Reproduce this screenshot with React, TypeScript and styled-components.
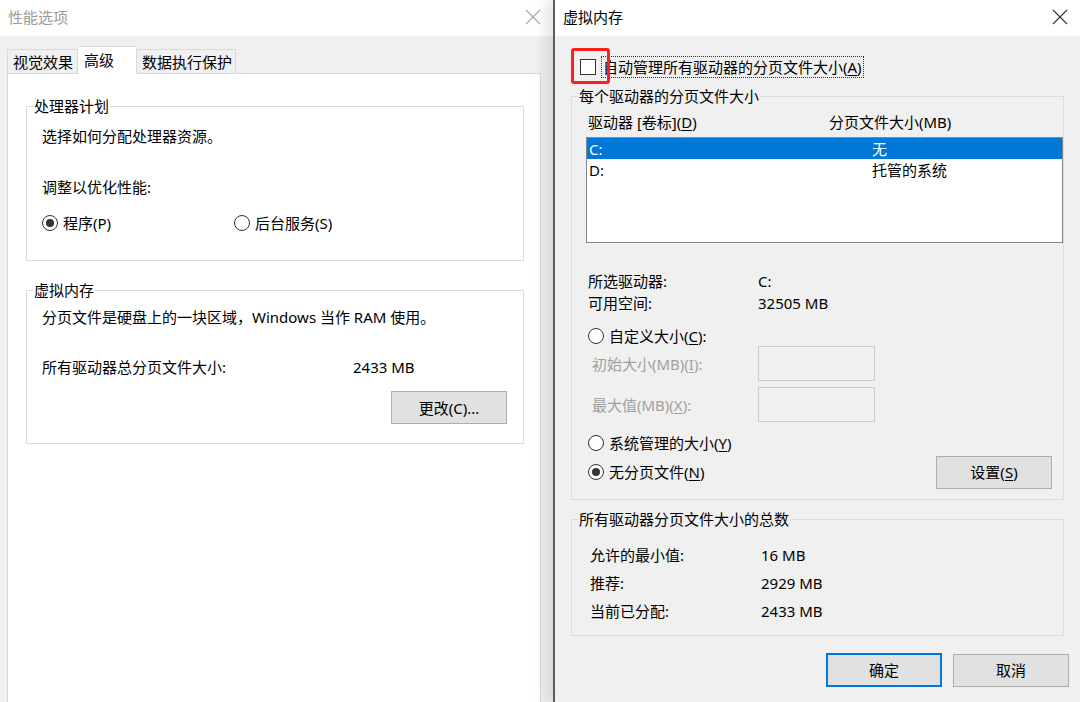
import React from 'react';
import styled, { createGlobalStyle } from 'styled-components';

const GlobalStyle = createGlobalStyle`
    html, body {
        margin: 0;
        padding: 0;
        background: #f0f0f0;
    }
    body {
        font-family: "Noto Sans", "Noto Sans CJK SC", sans-serif;
        font-size: 15px;
        line-height: 20px;
        color: #000;
    }
    * {
        box-sizing: border-box;
    }
`;

const Screen = styled.div`
    display: flex;
    width: 1080px;
    height: 702px;
    overflow: hidden;
`;

const Window = styled.div<{ $width?: number; $front?: boolean }>`
    display: flex;
    flex-direction: column;
    height: 100%;
    ${(p) => (p.$width ? `width: ${p.$width}px; flex: none;` : 'flex: 1;')}
    ${(p) =>
        p.$front &&
        `
        border-left: 2px solid #5c5c5c;
        box-shadow: -8px 0 12px rgba(0, 0, 0, 0.1);
        position: relative;
        z-index: 2;
    `}
`;

const TitleBar = styled.div<{ $inactive?: boolean }>`
    display: flex;
    align-items: center;
    justify-content: space-between;
    height: 36px;
    flex: none;
    background: #fff;
    padding: 0 12px 2px 8px;
    color: ${(p) => (p.$inactive ? '#9a9a9a' : '#000')};
`;

const CloseButton = styled.svg<{ $inactive?: boolean }>`
    width: 16px;
    height: 16px;
    stroke: ${(p) => (p.$inactive ? '#a8a8a8' : '#333')};
    stroke-width: 1.1;
    flex: none;
`;

const Close = ({ inactive }: { inactive?: boolean }) => (
    <CloseButton $inactive={inactive} viewBox="0 0 16 16">
        <line x1="1" y1="1" x2="15" y2="15" />
        <line x1="15" y1="1" x2="1" y2="15" />
    </CloseButton>
);

/* ---------- left dialog ---------- */

const LeftBody = styled.div`
    flex: 1;
    display: flex;
    flex-direction: column;
    background: #f0f0f0;
    padding: 10px 12px 0 7px;
`;

const TabStrip = styled.div`
    display: flex;
    align-items: flex-end;
    height: 27px;
    flex: none;
`;

const Tab = styled.div<{ $active?: boolean; $w: number }>`
    width: ${(p) => p.$w}px;
    height: ${(p) => (p.$active ? 28 : 24)}px;
    margin-bottom: ${(p) => (p.$active ? -1 : 0)}px;
    padding: ${(p) => (p.$active ? '3px 0 0 6px' : '2px 0 0 5px')};
    background: ${(p) => (p.$active ? '#fff' : '#f0f0f0')};
    border: 1px solid #d9d9d9;
    border-bottom: none;
    ${(p) => (p.$active ? 'border-left: none; border-right: none;' : '')}
    position: relative;
    z-index: 1;
    white-space: nowrap;
`;

const TabPanel = styled.div`
    flex: 1;
    background: #fff;
    border: 1px solid #d9d9d9;
    border-bottom: none;
    padding: 22px 16px 0 18px;
`;

const Group = styled.fieldset<{ $mt?: number; $pl?: number; $pr?: number; $pb?: number; $mr?: number }>`
    margin: ${(p) => p.$mt ?? 0}px ${(p) => p.$mr ?? 0}px 0 0;
    padding: 0 ${(p) => p.$pr ?? 16}px ${(p) => p.$pb ?? 10}px ${(p) => p.$pl ?? 15}px;
    border: 1px solid #dcdcdc;
    min-width: 0;
`;

const Legend = styled.legend<{ $ml?: number }>`
    margin-left: ${(p) => p.$ml ?? -9}px;
    padding: 0 1px;
    line-height: 20px;
`;

const TextRow = styled.div<{ $mt?: number }>`
    margin-top: ${(p) => p.$mt ?? 0}px;
    height: 20px;
    white-space: nowrap;
`;

const RadioRow = styled.div<{ $mt?: number; $cols?: string; $pl?: number }>`
    display: grid;
    grid-template-columns: ${(p) => p.$cols ?? 'auto'};
    align-items: center;
    margin-top: ${(p) => p.$mt ?? 0}px;
    padding-left: ${(p) => p.$pl ?? 0}px;
    min-height: 20px;
`;

const RadioLabel = styled.label`
    display: flex;
    align-items: center;
    gap: 5px;
    white-space: nowrap;
`;

const RadioCircle = styled.span<{ $checked?: boolean }>`
    width: 16px;
    height: 16px;
    flex: none;
    border-radius: 50%;
    border: 1px solid #333;
    background: #fff;
    display: flex;
    align-items: center;
    justify-content: center;
    &::after {
        content: '';
        width: 8px;
        height: 8px;
        border-radius: 50%;
        background: ${(p) => (p.$checked ? '#333' : 'transparent')};
    }
`;

const Radio = ({ checked, children }: { checked?: boolean; children: React.ReactNode }) => (
    <RadioLabel>
        <RadioCircle $checked={checked} />
        <span>{children}</span>
    </RadioLabel>
);

const InfoRow = styled.div<{ $cols: number; $h?: number; $mt?: number; $pl?: number }>`
    display: grid;
    grid-template-columns: ${(p) => p.$cols}px auto;
    align-items: center;
    height: ${(p) => p.$h ?? 20}px;
    margin-top: ${(p) => p.$mt ?? 0}px;
    padding-left: ${(p) => p.$pl ?? 0}px;
    white-space: nowrap;
`;

const TotalsList = styled.div`
    margin-top: 12px;
`;

const ButtonRow = styled.div<{ $mt?: number }>`
    display: flex;
    justify-content: flex-end;
    align-items: center;
    gap: 11px;
    margin-top: ${(p) => p.$mt ?? 0}px;
`;

const Button = styled.button<{ $default?: boolean }>`
    width: 116px;
    height: ${(p) => (p.$default ? 34 : 33)}px;
    background: #e1e1e1;
    border: ${(p) => (p.$default ? '2px solid #0078d7' : '1px solid #adadad')};
    font: inherit;
    color: #000;
    padding: 0;
    border-radius: 0;
`;

const U = styled.span`
    text-decoration: underline;
    text-underline-offset: 2px;
`;

/* ---------- right dialog ---------- */

const RightBody = styled.div`
    flex: 1;
    display: flex;
    flex-direction: column;
    background: #f0f0f0;
    padding: 20px 11px 0 16px;
`;

const CheckRow = styled.div`
    display: flex;
    align-items: center;
    height: 22px;
    padding-left: 9px;
`;

const CheckBox = styled.span`
    position: relative;
    width: 16px;
    height: 16px;
    flex: none;
    border: 1px solid #333;
    background: #fff;
`;

const Highlight = styled.span`
    position: absolute;
    left: -10px;
    top: -12px;
    width: 39px;
    height: 36px;
    border: 3px solid #ff1e1e;
    border-radius: 3px;
`;

const FocusLabel = styled.span`
    margin-left: 5px;
    height: 22px;
    padding: 0 1px;
    border: 1px dotted #333;
    display: flex;
    align-items: center;
    white-space: nowrap;
`;

const HeaderRow = styled.div`
    display: grid;
    grid-template-columns: 241px auto;
    margin-top: 6px;
    padding-left: 2px;
    height: 20px;
    white-space: nowrap;
`;

const ListBox = styled.div`
    margin-top: 5px;
    height: 106px;
    background: #fff;
    border: 1px solid #828790;
`;

const ListItem = styled.div<{ $selected?: boolean }>`
    display: grid;
    grid-template-columns: 283px auto;
    height: 21px;
    align-items: center;
    padding-left: 2px;
    background: ${(p) => (p.$selected ? '#0078d7' : 'transparent')};
    color: ${(p) => (p.$selected ? '#fff' : '#000')};
`;

const SizeRow = styled.div<{ $mt?: number }>`
    display: grid;
    grid-template-columns: 166px auto;
    align-items: center;
    height: 35px;
    margin-top: ${(p) => p.$mt ?? 0}px;
    padding-left: 6px;
    color: #a0a0a0;
    white-space: nowrap;
`;

const SizeInput = styled.div`
    width: 117px;
    height: 35px;
    border: 1px solid #cccccc;
    background: #f0f0f0;
`;

const SplitRow = styled.div`
    display: flex;
    justify-content: space-between;
    align-items: center;
    height: 34px;
    margin-top: 2px;
    padding-left: 2px;
    padding-right: 11px;
`;

const drives = [
    { name: 'C:', size: '无', selected: true },
    { name: 'D:', size: '托管的系统' },
];

const totals = [
    { label: '允许的最小值:', value: '16 MB' },
    { label: '推荐:', value: '2929 MB' },
    { label: '当前已分配:', value: '2433 MB' },
];

export default function App() {
    return (
        <>
            <GlobalStyle />
            <Screen>
                <Window $width={553}>
                    <TitleBar $inactive>
                        <span>性能选项</span>
                        <Close inactive />
                    </TitleBar>
                    <LeftBody>
                        <TabStrip>
                            <Tab $w={71}>视觉效果</Tab>
                            <Tab $w={58} $active>
                                高级
                            </Tab>
                            <Tab $w={100}>数据执行保护</Tab>
                        </TabStrip>
                        <TabPanel>
                            <Group $pb={27}>
                                <Legend>处理器计划</Legend>
                                <TextRow $mt={10}>选择如何分配处理器资源。</TextRow>
                                <TextRow $mt={31}>调整以优化性能:</TextRow>
                                <RadioRow $mt={16} $cols="192px auto">
                                    <Radio checked>程序(P)</Radio>
                                    <Radio>后台服务(S)</Radio>
                                </RadioRow>
                            </Group>
                            <Group $mt={19} $pb={19}>
                                <Legend>虚拟内存</Legend>
                                <TextRow $mt={7}>分页文件是硬盘上的一块区域，Windows 当作 RAM 使用。</TextRow>
                                <InfoRow $cols={311} $mt={30}>
                                    <span>所有驱动器总分页文件大小:</span>
                                    <span>2433 MB</span>
                                </InfoRow>
                                <ButtonRow $mt={14}>
                                    <Button>更改(C)...</Button>
                                </ButtonRow>
                            </Group>
                        </TabPanel>
                    </LeftBody>
                </Window>

                <Window $front>
                    <TitleBar>
                        <span>虚拟内存</span>
                        <Close />
                    </TitleBar>
                    <RightBody>
                        <CheckRow>
                            <CheckBox>
                                <Highlight />
                            </CheckBox>
                            <FocusLabel>
                                自动管理所有驱动器的分页文件大小(<U>A</U>)
                            </FocusLabel>
                        </CheckRow>

                        <Group $mt={8} $pl={14} $pr={0} $pb={10} $mr={5}>
                            <Legend $ml={-8}>每个驱动器的分页文件大小</Legend>
                            <HeaderRow>
                                <span>
                                    驱动器 [卷标](<U>D</U>)
                                </span>
                                <span>分页文件大小(MB)</span>
                            </HeaderRow>
                            <ListBox>
                                {drives.map((d) => (
                                    <ListItem key={d.name} $selected={d.selected}>
                                        <span>{d.name}</span>
                                        <span>{d.size}</span>
                                    </ListItem>
                                ))}
                            </ListBox>
                            <InfoRow $cols={170} $h={22} $mt={27} $pl={2}>
                                <span>所选驱动器:</span>
                                <span>C:</span>
                            </InfoRow>
                            <InfoRow $cols={170} $h={22} $pl={2}>
                                <span>可用空间:</span>
                                <span>32505 MB</span>
                            </InfoRow>
                            <RadioRow $mt={12} $pl={2}>
                                <Radio>
                                    自定义大小(<U>C</U>):
                                </Radio>
                            </RadioRow>
                            <SizeRow>
                                <span>
                                    初始大小(MB)(<U>I</U>):
                                </span>
                                <SizeInput />
                            </SizeRow>
                            <SizeRow $mt={6}>
                                <span>
                                    最大值(MB)(<U>X</U>):
                                </span>
                                <SizeInput />
                            </SizeRow>
                            <RadioRow $mt={11} $pl={2}>
                                <Radio>
                                    系统管理的大小(<U>Y</U>)
                                </Radio>
                            </RadioRow>
                            <SplitRow>
                                <Radio checked>
                                    无分页文件(<U>N</U>)
                                </Radio>
                                <Button>
                                    设置(<U>S</U>)
                                </Button>
                            </SplitRow>
                        </Group>

                        <Group $mt={9} $pl={14} $pr={0} $pb={10} $mr={5}>
                            <Legend $ml={-8}>所有驱动器分页文件大小的总数</Legend>
                            <TotalsList>
                                {totals.map((t) => (
                                    <InfoRow key={t.label} $cols={171} $h={28} $pl={4}>
                                        <span>{t.label}</span>
                                        <span>{t.value}</span>
                                    </InfoRow>
                                ))}
                            </TotalsList>
                        </Group>

                        <ButtonRow $mt={17}>
                            <Button $default>确定</Button>
                            <Button>取消</Button>
                        </ButtonRow>
                    </RightBody>
                </Window>
            </Screen>
        </>
    );
}
